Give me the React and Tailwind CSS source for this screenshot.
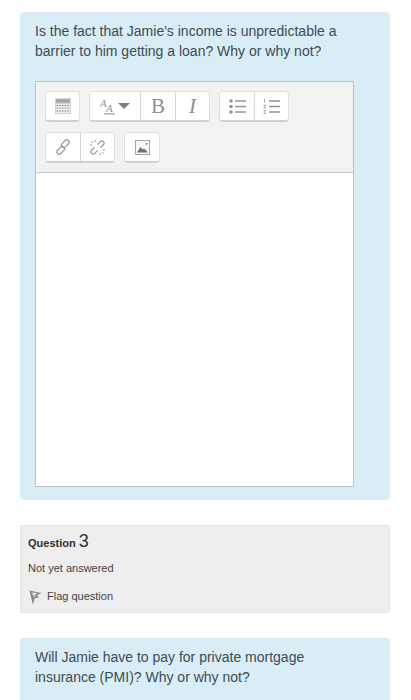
const font = { fontFamily: '"Liberation Sans", Arial, sans-serif' };
const serif = { fontFamily: '"Liberation Serif", serif' };

function Btn({ children, last, w = "w-[34px]" }) {
  return (
    <div className={`${w} h-full flex items-center justify-center ${last ? "" : "border-r border-[#d8d8d8]"}`}>
      {children}
    </div>
  );
}

function Group({ children }) {
  return (
    <div className="flex h-[31px] bg-white rounded-[4px] border border-[#e0e0e0] border-b-[2px] border-b-[#d0d0d0]">
      {children}
    </div>
  );
}

const G = "#959595";

const TableIcon = () => (
  <svg width="16" height="16" viewBox="0 0 16 16">
    <rect x="0" y="0" width="16" height="16" fill="#d2d2d2" />
    <rect x="1" y="1" width="14" height="4" fill="#b4b4b4" />
    <rect x="1" y="6" width="14" height="3" fill="#efefef" />
    <rect x="1" y="11" width="14" height="4" fill="#efefef" />
    <path d="M1.5 2.8h13M1.5 7.5h13M1.5 13h13" stroke="#777" strokeWidth="1" strokeDasharray="1.5 1.2" />
  </svg>
);

const ListIcon = () => (
  <svg width="17" height="15" viewBox="0 0 17 15">
    <circle cx="2" cy="2" r="1.8" fill={G} />
    <circle cx="2" cy="7.5" r="1.8" fill={G} />
    <circle cx="2" cy="13" r="1.8" fill={G} />
    <path d="M6 2h11M6 7.5h11M6 13h11" stroke={G} strokeWidth="1.3" />
  </svg>
);

const NumIcon = () => (
  <svg width="17" height="17" viewBox="0 0 17 17">
    <path d="M1.5 0.5v4M0.5 7h2.2l-2 3h2.4M0.5 12.5h2.2l-1 1.5 1 1.5H0.5" stroke={G} strokeWidth="0.8" fill="none" />
    <path d="M6 3h11M6 8.5h11M6 14h11" stroke={G} strokeWidth="1.3" />
  </svg>
);

const LinkIcon = () => (
  <svg width="16" height="16" viewBox="0 0 16 16" fill="none" stroke={G} strokeWidth="1.2">
    <rect x="8" y="0.2" width="4.6" height="9" rx="2.3" transform="rotate(45 10.3 4.7)" />
    <rect x="3.4" y="6.8" width="4.6" height="9" rx="2.3" transform="rotate(45 5.7 11.3)" />
  </svg>
);

const HOOK = "M-2.2 3V-1.2a2.2 2.2 0 0 1 4.4 0V3";

const UnlinkIcon = () => (
  <svg width="17" height="17" viewBox="0 0 17 17" fill="none" stroke={G}>
    <path d={HOOK} strokeWidth="1.2" transform="translate(12 5) rotate(45)" />
    <path d={HOOK} strokeWidth="1.2" transform="translate(5 12) rotate(225)" />
    <path d="M6 0.8v2.4M2.2 2.2 4 4M0.8 6h2.4M11 16.2v-2.4M14.8 14.8 13 13M16.2 11h-2.4" strokeWidth="0.9" />
  </svg>
);

const ImageIcon = () => (
  <svg width="15" height="15" viewBox="0 0 15 15">
    <rect x="0.5" y="0.5" width="14" height="14" fill="#f7f7f7" stroke="#a6a6a6" />
    <path d="M2 12.5 5.5 7 7.5 9.5 9 8.5 13 12.5Z" fill="#6f6f6f" />
    <circle cx="11.5" cy="3.8" r="0.9" fill="#6f6f6f" />
  </svg>
);

const FontIcon = () => (
  <svg width="16" height="17" viewBox="0 0 16 17">
    <text x="0" y="9" fontSize="11" fontStyle="italic" fill={G} style={serif}>A</text>
    <text x="6" y="14" fontSize="11" fontStyle="italic" fill={G} style={serif}>A</text>
    <rect x="4" y="15" width="11" height="1.6" fill="#b5b5b5" />
  </svg>
);

function QuestionCard({ children, className = "" }) {
  return (
    <div className={`bg-[#d9edf7] rounded-[4px] px-[15px] ${className}`}>{children}</div>
  );
}

export default function App() {
  return (
    <div style={font} className="w-[411px] h-[700px] overflow-hidden bg-white pt-3 pl-5 pr-[21px] text-[14px] leading-[20px]">
      <QuestionCard className="h-[488px] pt-[9px]">
        <p className="text-[#3f4b52] h-[40px] whitespace-nowrap">
          Is the fact that Jamie's income is unpredictable a<br />
          barrier to him getting a loan? Why or why not?
        </p>
        <div className="mt-[20px] w-[319px] h-[406px] border border-[#b9c3c8] bg-white flex flex-col">
          <div className="h-[91px] bg-[#f2f2f2] border-b border-[#c8c8c8] pt-[9px] pl-[9px] flex flex-col gap-[10px]">
            <div className="flex gap-[9px]">
              <Group><Btn last w="w-[33px]"><TableIcon /></Btn></Group>
              <Group>
                <Btn w="w-[51px]">
                  <span className="flex items-center gap-[2px]">
                    <FontIcon />
                    <svg width="12" height="6" viewBox="0 0 12 6"><path d="M0 0h12L6 6Z" fill="#7f7f7f" /></svg>
                  </span>
                </Btn>
                <Btn w="w-[35px]">
                  <span style={serif} className="text-[21px] text-[#8f8f8f] leading-none">B</span>
                </Btn>
                <Btn last w="w-[33px]">
                  <span style={serif} className="italic text-[21px] text-[#8f8f8f] leading-none">I</span>
                </Btn>
              </Group>
              <Group>
                <Btn w="w-[35px]"><ListIcon /></Btn>
                <Btn last w="w-[33px]"><NumIcon /></Btn>
              </Group>
            </div>
            <div className="flex gap-[9px]">
              <Group>
                <Btn w="w-[35px]"><LinkIcon /></Btn>
                <Btn last w="w-[33px]"><UnlinkIcon /></Btn>
              </Group>
              <Group><Btn last><ImageIcon /></Btn></Group>
            </div>
          </div>
          <div className="flex-1 bg-white" />
        </div>
      </QuestionCard>

      <div className="mt-[25px] h-[88px] bg-[#eeeeee] border border-[#e6e6e6] rounded-[2px] pl-[7px] pt-[5px] text-[#333]">
        <div className="flex items-baseline h-[24px] text-[#2f2f2f]">
          <span className="text-[11px] font-bold">Question</span>
          <span className="text-[18px] ml-[3px]">3</span>
        </div>
        <div className="text-[11px] leading-[16px] mt-[5px] text-[#444]">Not yet answered</div>
        <div className="flex items-center text-[11px] leading-[16px] mt-[12px] text-[#444]">
          <svg width="13" height="14" viewBox="0 0 13 14" className="ml-[1px] mt-[2px]">
            <path d="M0.5 0.5 12.5 3 8 5.5 10 7.5 5.5 8.5 4.5 13.5 3.5 13.5Z" fill="#8c8c8c" />
            <path d="M3 2.5 8.5 3.3 5 5.5 6.5 6.5 5 7Z" fill="#eeeeee" />
          </svg>
          <span className="ml-[5px]">Flag question</span>
        </div>
      </div>

      <QuestionCard className="mt-[25px] h-[80px] pt-[9px]">
        <p className="text-[#3f4b52] whitespace-nowrap">
          Will Jamie have to pay for private mortgage<br />
          insurance (PMI)? Why or why not?
        </p>
      </QuestionCard>
    </div>
  );
}
